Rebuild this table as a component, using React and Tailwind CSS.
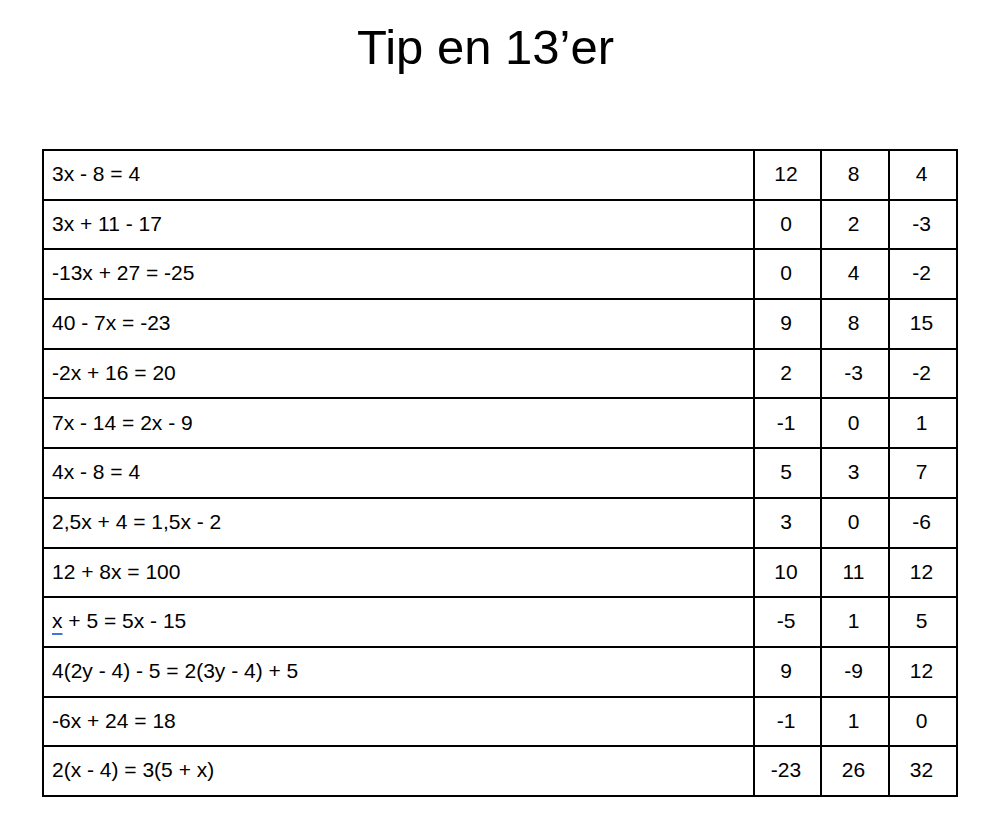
const rows = [
  ["3x - 8 = 4", "12", "8", "4"],
  ["3x + 11 - 17", "0", "2", "-3"],
  ["-13x + 27 = -25", "0", "4", "-2"],
  ["40 - 7x = -23", "9", "8", "15"],
  ["-2x + 16 = 20", "2", "-3", "-2"],
  ["7x - 14 = 2x - 9", "-1", "0", "1"],
  ["4x - 8 = 4", "5", "3", "7"],
  ["2,5x + 4 = 1,5x - 2", "3", "0", "-6"],
  ["12 + 8x = 100", "10", "11", "12"],
  ["x + 5 = 5x - 15", "-5", "1", "5"],
  ["4(2y - 4) - 5 = 2(3y - 4) + 5", "9", "-9", "12"],
  ["-6x + 24 = 18", "-1", "1", "0"],
  ["2(x - 4) = 3(5 + x)", "-23", "26", "32"],
];

function Equation({ text }) {
  // the "x" in row 10 carries a blue spell-check underline
  if (text.startsWith("x + 5")) {
    return (
      <span>
        <span className="underline decoration-[#3b78d8] decoration-2 underline-offset-[5px]">x</span>
        {text.slice(1)}
      </span>
    );
  }
  return <span>{text}</span>;
}

export default function App() {
  return (
    <div
      className="w-[1000px] h-[829px] bg-white text-black overflow-hidden"
      style={{ fontFamily: '"Liberation Sans", Arial, sans-serif' }}
    >
      <h1 className="pt-[23px] pr-[29px] text-center text-[49px] leading-none font-normal">
        Tip en 13’er
      </h1>

      <div className="ml-[42px] mt-[77px] w-[916px] border-t-2 border-l-2 border-black grid grid-cols-[711px_67px_68px_68px] auto-rows-[49.7px] text-[21px]">
        {rows.map((r, i) => (
          <div key={i} className="contents">
            <div className="border-r-2 border-b-2 border-black flex items-center pl-2 pb-[2px]">
              <Equation text={r[0]} />
            </div>
            {r.slice(1).map((n, j) => (
              <div key={j} className="border-r-2 border-b-2 border-black flex items-center justify-center pr-[3px] pb-[2px]">
                {n}
              </div>
            ))}
          </div>
        ))}
      </div>
    </div>
  );
}
